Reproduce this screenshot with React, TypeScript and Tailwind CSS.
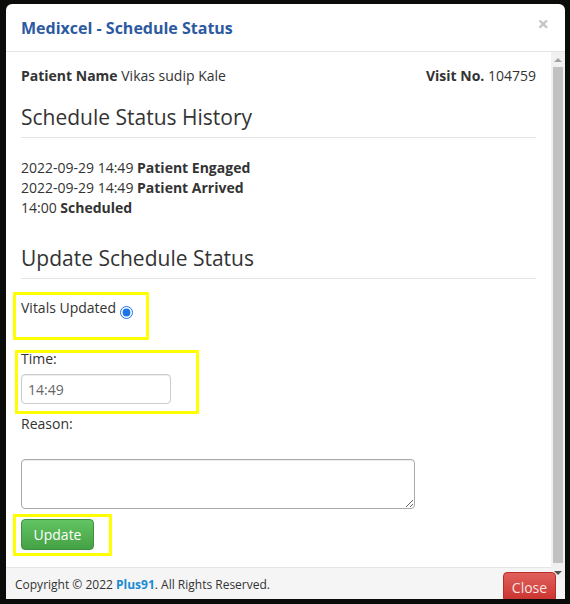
import React from 'react'

function Highlight({ className }: { className: string }) {
  return <span className={`pointer-events-none absolute border-[3px] border-[#ffff00] ${className}`} />
}

function HistoryLine({ when, status }: { when: string; status: string }) {
  return (
    <div className="leading-[20px]">
      {when} <b className="font-bold">{status}</b>
    </div>
  )
}

export default function App() {
  return (
    <div className="h-[604px] w-[570px] bg-[#0b0b0a] pl-[6px] pr-[5px] pt-[4px] pb-[5px] text-[#333] [font-family:'Open_Sans',sans-serif]">
      <div className="relative flex h-full flex-col overflow-hidden rounded-t-[6px] bg-white">
        {/* header */}
        <div className="flex h-[48px] shrink-0 items-center justify-between border-b border-[#e5e5e5] pl-[15px] pr-[16px]">
          <h4 className="text-[16px] font-bold leading-[20px] text-[#2c5aa0]">Medixcel - Schedule Status</h4>
          <span className="mt-[-8px] text-[20px] font-bold leading-[20px] text-[#c4c4c4]">×</span>
        </div>

        {/* body */}
        <div className="flex-1 pl-[15px] pr-[29px] pt-[14px] text-[14px]">
          <div className="flex justify-between leading-[20px]">
            <div>
              <b className="font-bold">Patient Name</b> Vikas sudip Kale
            </div>
            <div>
              <b className="font-bold">Visit No.</b> 104759
            </div>
          </div>

          <h3 className="mt-[19px] border-b border-[#e5e5e5] pb-[8px] text-[21px] leading-[24px] font-normal text-[#333]">
            Schedule Status History
          </h3>

          <div className="mt-[20px]">
            <HistoryLine when="2022-09-29 14:49" status="Patient Engaged" />
            <HistoryLine when="2022-09-29 14:49" status="Patient Arrived" />
            <HistoryLine when="14:00" status="Scheduled" />
          </div>

          <h3 className="mt-[28px] border-b border-[#e5e5e5] pb-[8px] text-[21px] leading-[24px] font-normal text-[#333]">
            Update Schedule Status
          </h3>

          <div className="relative mt-[19px] flex items-start leading-[20px]">
            <span>Vitals Updated</span>
            <input
              type="radio"
              defaultChecked
              readOnly
              className="ml-[4px] mt-[8px] h-[13px] w-[13px] accent-[#1a73e8]"
            />
            <Highlight className="left-[-8px] top-[-6px] h-[48px] w-[136px]" />
          </div>

          <div className="relative mt-[30px]">
            <label className="block leading-[20px]">Time:</label>
            <div className="mt-[5px] flex h-[30px] w-[150px] items-center rounded-[4px] border border-[#ccc] px-[6px] text-[#666] shadow-[inset_0_1px_1px_rgba(0,0,0,0.075)]">
              14:49
            </div>
            <Highlight className="left-[-6px] top-[1px] h-[64px] w-[184px]" />
          </div>

          <label className="mt-[10px] block leading-[20px]">Reason:</label>
          <textarea
            readOnly
            className="mt-[25px] block h-[50px] w-[394px] resize rounded-[4px] border border-[#aaa] shadow-[inset_0_1px_1px_rgba(0,0,0,0.075)]"
          />

          <div className="relative mt-[10px] w-fit">
            <button
              type="button"
              className="h-[31px] w-[73px] rounded-[4px] border border-[#3e8f3e] bg-gradient-to-b from-[#62c462] to-[#45a145] text-[14px] text-white"
            >
              Update
            </button>
            <Highlight className="left-[-8px] top-[-5px] h-[42px] w-[99px]" />
          </div>
        </div>

        {/* scrollbar */}
        <div className="absolute right-0 top-[48px] flex h-[527px] w-[14px] flex-col items-center bg-[#f1f1f1]">
          <div className="mt-[6px] h-0 w-0 border-x-[4px] border-b-[4px] border-x-transparent border-b-[#a3a3a3]" />
          <div className="mt-[5px] w-[10px] flex-1 bg-[#c1c1c1]" />
          <div className="mb-[4px] mt-[8px] h-0 w-0 border-x-[4px] border-t-[4px] border-x-transparent border-t-[#505050]" />
        </div>

        {/* footer */}
        <div className="flex h-[32px] shrink-0 items-start justify-between border-t border-[#e5e5e5] bg-[#f5f5f5] pl-[9px] pr-[9px] pt-[4px]">
          <p className="mt-[3px] text-[12px] leading-[20px] text-[#333]">
            Copyright © 2022 <b className="font-bold text-[#1b8ad3]">Plus91</b>. All Rights Reserved.
          </p>
          <button
            type="button"
            className="relative z-10 h-[30px] w-[53px] rounded-[4px] border border-[#b92c28] bg-gradient-to-b from-[#e0605c] to-[#c9302c] text-[14px] text-[#f6e4e4]"
          >
            Close
          </button>
        </div>
      </div>
    </div>
  )
}
